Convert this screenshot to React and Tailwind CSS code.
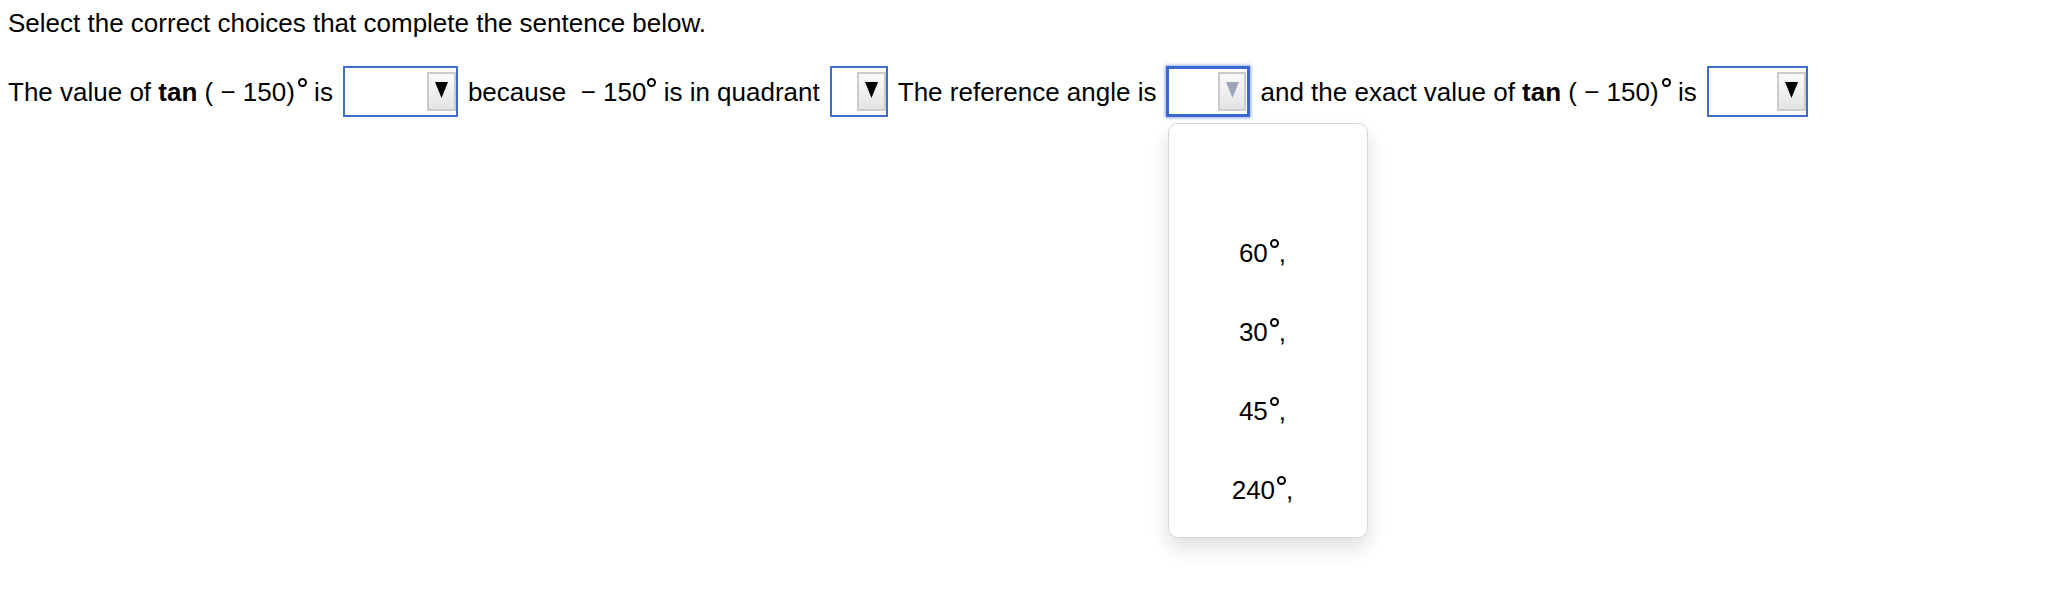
import React from "react";

function Tri({ color = "#000" }) {
  return (
    <svg width="13" height="16" viewBox="0 0 13 16" className="-mt-[3px]">
      <polygon points="0,0 13,0 6.5,16" fill={color} />
    </svg>
  );
}

function Btn({ color, w = "w-[29px]" }) {
  return (
    <div
      className={`${w} h-[39px] border-2 border-[#cbcbcb] bg-gradient-to-b from-[#fbfbfb] to-[#e4e4e4] flex items-center justify-center`}
    >
      <Tri color={color} />
    </div>
  );
}

function Box({ w }) {
  return (
    <div
      className={`${w} h-[51px] shrink-0 border-2 border-[#3f6cc9] bg-white flex items-center justify-end`}
    >
      <Btn />
    </div>
  );
}

function Deg({ ml = "ml-[1px]" }) {
  return (
    <span
      className={`inline-block relative -top-[14px] w-[9px] h-[9px] rounded-full border-2 border-black ${ml}`}
    />
  );
}

export default function App() {
  const items = ["60", "30", "45", "240"];
  return (
    <div
      className="w-[2046px] h-[598px] bg-white text-black text-[26px] leading-[30px] pt-2 pl-2"
      style={{ fontFamily: '"Liberation Sans", Arial, Helvetica, sans-serif' }}
    >
      <div>Select the correct choices that complete the sentence below.</div>
      <div className="mt-[28px] flex items-center gap-[10px] whitespace-nowrap">
        <span>
          The value of <b className="font-bold">tan</b> ( − 150)
          <Deg ml="ml-[3px]" /> is
        </span>
        <Box w="w-[115px]" />
        <span>
          because{"\u00a0"} − 150
          <Deg /> is in quadrant
        </span>
        <Box w="w-[58px]" />
        <span>The reference angle is</span>
        <div className="relative shrink-0">
          <div className="w-[84px] h-[51px] border-[3px] border-[#3a68d2] bg-white flex items-center justify-end pr-[1px] shadow-[0_0_3px_1px_rgba(70,110,220,0.55)]">
            <Btn color="#9ea6b9" w="w-[28px]" />
          </div>
          <div className="absolute left-[2px] top-[57px] w-[200px] h-[415px] rounded-[10px] border border-[#d6d6d6] bg-white shadow-[0_10px_20px_rgba(0,0,0,0.13)] py-[10px] z-10">
            <div className="h-[79px]" />
            {items.map((v) => (
              <div key={v} className="h-[79px] flex items-center justify-center pr-3">
                <span>
                  {v}
                  <Deg ml="ml-[2px]" />,
                </span>
              </div>
            ))}
          </div>
        </div>
        <span>
          and the exact value of <b className="font-bold">tan</b> ( − 150)
          <Deg ml="ml-[3px]" /> is
        </span>
        <Box w="w-[101px]" />
      </div>
    </div>
  );
}
